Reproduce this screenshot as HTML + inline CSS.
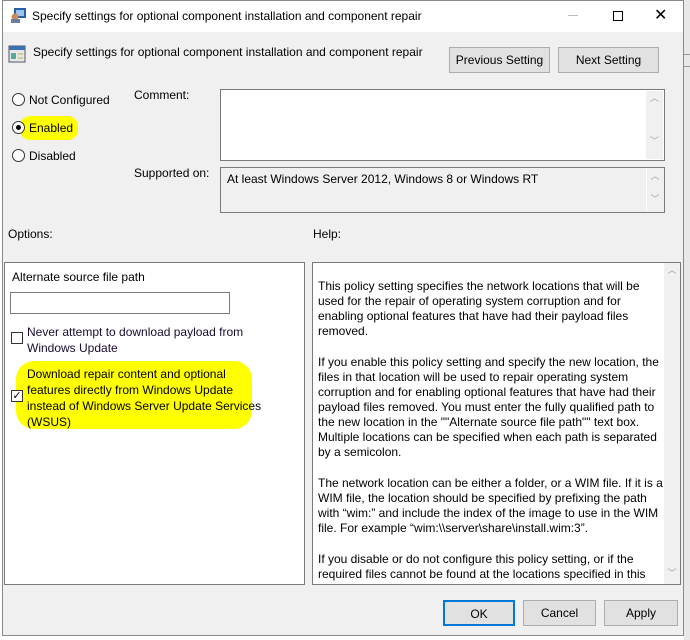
<!DOCTYPE html>
<html><head><style>
*{margin:0;padding:0;box-sizing:border-box}
body{width:690px;height:640px;background:#fff;font-family:"Liberation Sans",sans-serif;font-size:12px;color:#000;position:relative;overflow:hidden}
.a{position:absolute}
.win{left:2px;top:0;width:682px;height:636px;background:#f0f0f0;border:1px solid #8a8a8a}
.btn{position:absolute;background:#e1e1e1;border:1px solid #adadad;text-align:center;font-size:12px}
.radio{position:absolute;width:13px;height:13px;border:1px solid #333;border-radius:50%;background:#fff}
.hl{position:absolute;background:#ffff00;border-radius:10px}
.box{position:absolute;border:1px solid #7a7a7a;background:#fff}
.sb{position:absolute;right:0;top:0;bottom:0;width:17px;background:#f0f0f0;color:#a0a0a0;font-size:9px;text-align:center}
p{margin-bottom:16px}
</style></head><body>
<div class="a" style="left:684px;top:0;width:6px;height:640px;background:#e8e8e8"></div>
<div class="a" style="left:684px;top:54px;width:6px;height:1px;background:#999"></div>
<div class="a" style="left:684px;top:66px;width:6px;height:1px;background:#999"></div>
<div class="a win"></div>
<div class="a" style="left:3px;top:1px;width:680px;height:31px;background:#fff"></div>
<svg class="a" style="left:10px;top:6px" width="18" height="18"><rect x="4" y="2" width="12" height="10" fill="#2a5fa8"/><rect x="6" y="4" width="8" height="6" fill="#9cc3ec"/><circle cx="5" cy="11" r="3.5" fill="#c88a5a"/><rect x="1" y="13" width="9" height="4" fill="#6a7fa0"/></svg>
<div class="a" style="left:32px;top:9px;font-size:12px">Specify settings for optional component installation and component repair</div>
<div class="a" style="left:568px;top:15px;width:10px;height:1px;background:#bbb"></div>
<div class="a" style="left:613px;top:11px;width:10px;height:10px;border:1px solid #000"></div>
<div class="a" style="left:654px;top:5px;font-size:16px">✕</div>
<svg class="a" style="left:8px;top:45px" width="18" height="18"><rect x="1" y="1" width="16" height="16" fill="#e8e8e8" stroke="#556"/><rect x="1" y="1" width="16" height="4" fill="#3a6fb0"/><rect x="3" y="8" width="5" height="6" fill="#5a9"/><rect x="10" y="8" width="5" height="2" fill="#cc9"/><rect x="10" y="12" width="5" height="2" fill="#cc9"/></svg>
<div class="a" style="left:33px;top:45px">Specify settings for optional component installation and component repair</div>
<div class="btn" style="left:449px;top:47px;width:101px;height:26px;line-height:24px">Previous Setting</div>
<div class="btn" style="left:558px;top:47px;width:101px;height:26px;line-height:24px">Next Setting</div>
<div class="hl" style="left:20px;top:116px;width:58px;height:24px"></div>
<div class="radio" style="left:12px;top:93px"></div>
<div class="a" style="left:29px;top:93px">Not Configured</div>
<div class="radio" style="left:12px;top:121px"><div class="a" style="left:3px;top:3px;width:5px;height:5px;border-radius:50%;background:#000"></div></div>
<div class="a" style="left:29px;top:121px">Enabled</div>
<div class="radio" style="left:12px;top:149px"></div>
<div class="a" style="left:29px;top:149px">Disabled</div>
<div class="a" style="left:134px;top:88px">Comment:</div>
<div class="box" style="left:220px;top:89px;width:445px;height:72px"><div class="sb" style="top:1px;bottom:1px;right:1px">︿<br><br><br><br>﹀</div></div>
<div class="a" style="left:134px;top:166px">Supported on:</div>
<div class="box" style="left:220px;top:167px;width:445px;height:46px;background:#f0f0f0"><div class="a" style="left:6px;top:4px">At least Windows Server 2012, Windows 8 or Windows RT</div><div class="sb" style="border-left:1px solid #fff;top:1px;bottom:1px;right:1px">︿<br><br>﹀</div></div>
<div class="a" style="left:8px;top:227px">Options:</div>
<div class="a" style="left:313px;top:227px">Help:</div>
<div class="box" style="left:4px;top:262px;width:301px;height:323px"></div>
<div class="a" style="left:12px;top:270px">Alternate source file path</div>
<div class="box" style="left:10px;top:292px;width:220px;height:22px"></div>
<div class="a" style="left:11px;top:332px;width:12px;height:12px;border:1px solid #333;background:#fff"></div>
<div class="a" style="left:27px;top:324px;line-height:16px;color:#1a0a30">Never attempt to download payload from<br>Windows Update</div>
<div class="hl" style="left:16px;top:361px;width:236px;height:68px;border-radius:18px"></div>
<div class="a" style="left:11px;top:390px;width:12px;height:12px;border:1px solid #333;background:#fff;font-size:11px;line-height:10px;text-align:center">✓</div>
<div class="a" style="left:27px;top:366px;line-height:16px">Download repair content and optional<br>features directly from Windows Update<br>instead of Windows Server Update Services<br>(WSUS)</div>
<div class="box" style="left:312px;top:262px;width:369px;height:323px;overflow:hidden">
<div class="a" style="left:5px;top:16px;width:345px;line-height:15px">
<p>This policy setting specifies the network locations that will be used for the repair of operating system corruption and for enabling optional features that have had their payload files removed.</p>
<p>If you enable this policy setting and specify the new location, the files in that location will be used to repair operating system corruption and for enabling optional features that have had their payload files removed. You must enter the fully qualified path to the new location in the ""Alternate source file path"" text box. Multiple locations can be specified when each path is separated by a semicolon.</p>
<p>The network location can be either a folder, or a WIM file. If it is a WIM file, the location should be specified by prefixing the path with “wim:” and include the index of the image to use in the WIM file. For example “wim:\\server\share\install.wim:3”.</p>
<p>If you disable or do not configure this policy setting, or if the required files cannot be found at the locations specified in this</p>
</div>
<div class="sb" style="top:0;bottom:0;right:0;width:16px;line-height:14px">︿<div style="position:absolute;bottom:4px;width:16px">﹀</div></div>
</div>
<div class="btn" style="left:443px;top:600px;width:72px;height:26px;line-height:24px;border:2px solid #0078d7">OK</div>
<div class="btn" style="left:523px;top:600px;width:73px;height:26px;line-height:24px">Cancel</div>
<div class="btn" style="left:604px;top:600px;width:74px;height:26px;line-height:24px">Apply</div>
</body></html>
